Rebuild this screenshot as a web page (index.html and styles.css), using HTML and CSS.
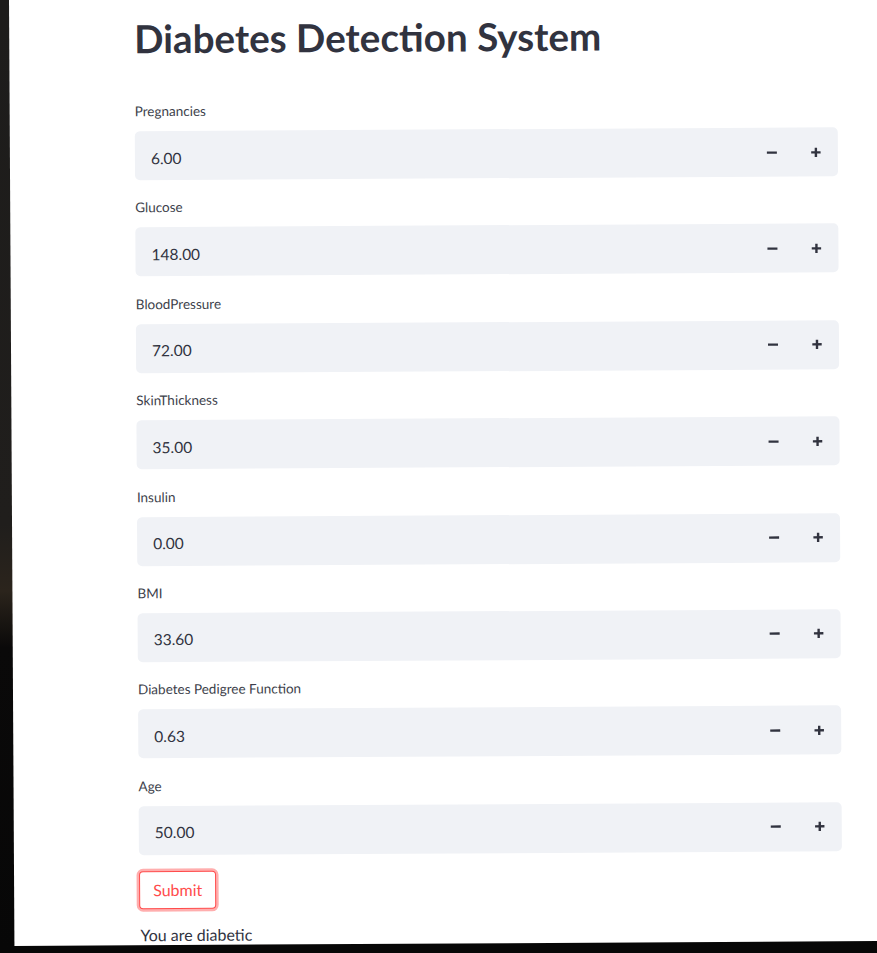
FILE: index.html
```html
<!DOCTYPE html>
<html lang="en">
<head>
<meta charset="utf-8">
<title>Diabetes Detection System</title>
<link rel="stylesheet" href="styles.css">
</head>
<body>
<div class="page">
  <main class="content">
    <h1 class="title">Diabetes Detection System</h1>
    <form class="form" onsubmit="return false">
      <div class="group">
        <label class="label">Pregnancies</label>
        <div class="num">
          <div class="num-value">6.00</div>
          <div class="step"><svg viewBox="0 0 12 12" width="12" height="12"><rect x="1" y="4.8" width="10" height="2.4" fill="#31333f"/></svg></div>
          <div class="step"><svg viewBox="0 0 12 12" width="12" height="12"><rect x="1.3" y="4.8" width="9.4" height="2.4" fill="#31333f"/><rect x="4.8" y="1.3" width="2.4" height="9.4" fill="#31333f"/></svg></div>
        </div>
      </div>
      <div class="group">
        <label class="label">Glucose</label>
        <div class="num">
          <div class="num-value">148.00</div>
          <div class="step"><svg viewBox="0 0 12 12" width="12" height="12"><rect x="1" y="4.8" width="10" height="2.4" fill="#31333f"/></svg></div>
          <div class="step"><svg viewBox="0 0 12 12" width="12" height="12"><rect x="1.3" y="4.8" width="9.4" height="2.4" fill="#31333f"/><rect x="4.8" y="1.3" width="2.4" height="9.4" fill="#31333f"/></svg></div>
        </div>
      </div>
      <div class="group">
        <label class="label">BloodPressure</label>
        <div class="num">
          <div class="num-value">72.00</div>
          <div class="step"><svg viewBox="0 0 12 12" width="12" height="12"><rect x="1" y="4.8" width="10" height="2.4" fill="#31333f"/></svg></div>
          <div class="step"><svg viewBox="0 0 12 12" width="12" height="12"><rect x="1.3" y="4.8" width="9.4" height="2.4" fill="#31333f"/><rect x="4.8" y="1.3" width="2.4" height="9.4" fill="#31333f"/></svg></div>
        </div>
      </div>
      <div class="group">
        <label class="label">SkinThickness</label>
        <div class="num">
          <div class="num-value">35.00</div>
          <div class="step"><svg viewBox="0 0 12 12" width="12" height="12"><rect x="1" y="4.8" width="10" height="2.4" fill="#31333f"/></svg></div>
          <div class="step"><svg viewBox="0 0 12 12" width="12" height="12"><rect x="1.3" y="4.8" width="9.4" height="2.4" fill="#31333f"/><rect x="4.8" y="1.3" width="2.4" height="9.4" fill="#31333f"/></svg></div>
        </div>
      </div>
      <div class="group">
        <label class="label">Insulin</label>
        <div class="num">
          <div class="num-value">0.00</div>
          <div class="step"><svg viewBox="0 0 12 12" width="12" height="12"><rect x="1" y="4.8" width="10" height="2.4" fill="#31333f"/></svg></div>
          <div class="step"><svg viewBox="0 0 12 12" width="12" height="12"><rect x="1.3" y="4.8" width="9.4" height="2.4" fill="#31333f"/><rect x="4.8" y="1.3" width="2.4" height="9.4" fill="#31333f"/></svg></div>
        </div>
      </div>
      <div class="group">
        <label class="label">BMI</label>
        <div class="num">
          <div class="num-value">33.60</div>
          <div class="step"><svg viewBox="0 0 12 12" width="12" height="12"><rect x="1" y="4.8" width="10" height="2.4" fill="#31333f"/></svg></div>
          <div class="step"><svg viewBox="0 0 12 12" width="12" height="12"><rect x="1.3" y="4.8" width="9.4" height="2.4" fill="#31333f"/><rect x="4.8" y="1.3" width="2.4" height="9.4" fill="#31333f"/></svg></div>
        </div>
      </div>
      <div class="group">
        <label class="label">Diabetes Pedigree Function</label>
        <div class="num">
          <div class="num-value">0.63</div>
          <div class="step"><svg viewBox="0 0 12 12" width="12" height="12"><rect x="1" y="4.8" width="10" height="2.4" fill="#31333f"/></svg></div>
          <div class="step"><svg viewBox="0 0 12 12" width="12" height="12"><rect x="1.3" y="4.8" width="9.4" height="2.4" fill="#31333f"/><rect x="4.8" y="1.3" width="2.4" height="9.4" fill="#31333f"/></svg></div>
        </div>
      </div>
      <div class="group">
        <label class="label">Age</label>
        <div class="num">
          <div class="num-value">50.00</div>
          <div class="step"><svg viewBox="0 0 12 12" width="12" height="12"><rect x="1" y="4.8" width="10" height="2.4" fill="#31333f"/></svg></div>
          <div class="step"><svg viewBox="0 0 12 12" width="12" height="12"><rect x="1.3" y="4.8" width="9.4" height="2.4" fill="#31333f"/><rect x="4.8" y="1.3" width="2.4" height="9.4" fill="#31333f"/></svg></div>
        </div>
      </div>
      <button class="submit" type="button">Submit</button>
    </form>
    <p class="result">You are diabetic</p>
  </main>
</div>
</body>
</html>
```
FILE: styles.css
```css
html, body {
  margin: 0;
  padding: 0;
  height: 100%;
}
body {
  background: linear-gradient(to bottom, #1d1c1b 0%, #201e1c 55%, #2b241c 62%, #0a0909 68%, #070707 100%);
  overflow: hidden;
  font-family: "Source Sans Pro", Lato, "Noto Sans", sans-serif;
  color: #31333f;
}
.page {
  margin-left: 9px;
  width: 900px;
  height: 946px;
  background: #ffffff;
  transform: rotate(-0.33deg);
  transform-origin: 0 0;
  overflow: hidden;
}
.content {
  padding-left: 125px;
  width: 703px;
}
.title {
  margin: 0;
  padding-top: 14px;
  font-size: 38.6px;
  line-height: 50px;
  font-weight: 700;
  color: #31333f;
  letter-spacing: 0;
}
.form {
  margin-top: 38px;
}
.group {
  margin-bottom: 17.4px;
}
.label {
  display: block;
  font-size: 13.5px;
  line-height: 20px;
  height: 20px;
  margin-bottom: 10px;
  color: #3d3f4b;
}
.num {
  display: flex;
  height: 49px;
  background: #f0f2f6;
  border-radius: 5px;
}
.num-value {
  flex: 1;
  display: flex;
  align-items: center;
  padding-left: 16px;
  padding-top: 4px;
  font-size: 15.5px;
  color: #31333f;
}
.step {
  width: 44px;
  display: flex;
  align-items: center;
  justify-content: center;
}
.step svg {
  display: block;
}
.submit {
  display: block;
  margin-top: -1px;
  height: 38px;
  padding: 0 13px;
  background: #ffffff;
  border: 1px solid #ff4b4b;
  border-radius: 4px;
  box-shadow: 0 0 0 2.5px rgba(255, 75, 75, 0.45);
  color: #ff4b4b;
  font-family: inherit;
  font-size: 16px;
  line-height: 36px;
}
.result {
  margin: 14px 0 0 1px;
  font-size: 16px;
  line-height: 24px;
  color: #31333f;
}
```
